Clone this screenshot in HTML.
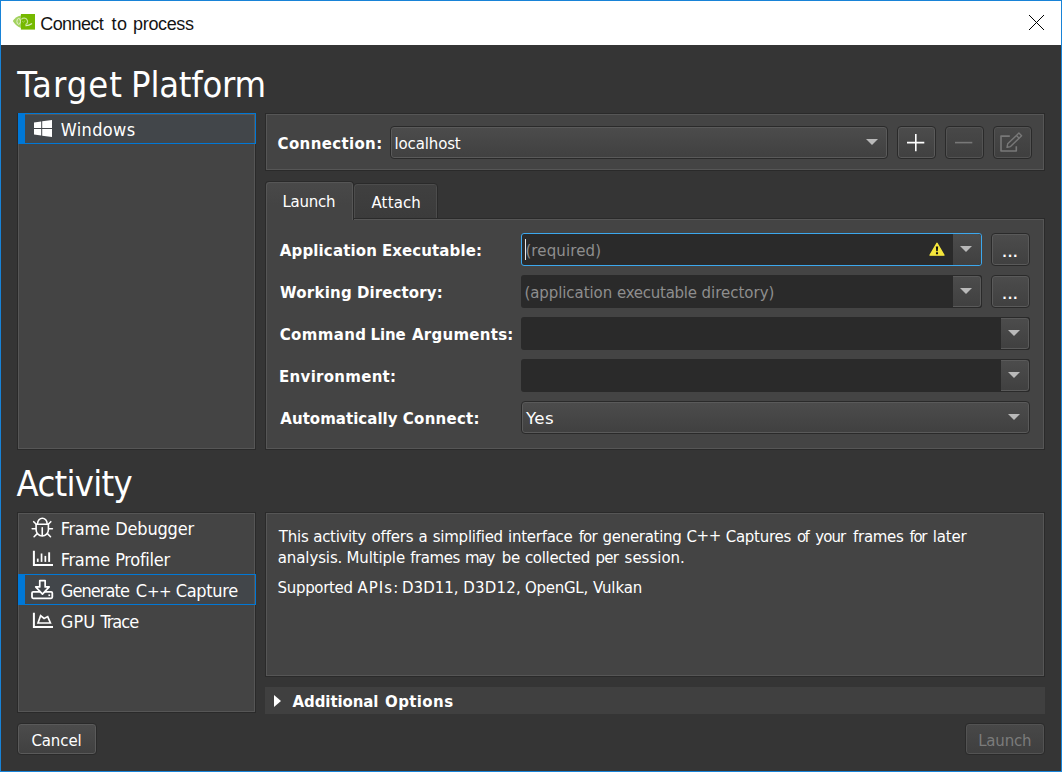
<!DOCTYPE html>
<html>
<head>
<meta charset="utf-8">
<title>Connect to process</title>
<style>
*{box-sizing:border-box;margin:0;padding:0}
html,body{width:1062px;height:772px;overflow:hidden;background:#353535}
body{position:relative;font-family:"DejaVu Sans Condensed","DejaVu Sans","Liberation Sans",sans-serif;font-size:16px;color:#fff}
.abs{position:absolute}
#win{position:absolute;left:0;top:0;width:1062px;height:772px;border:1px solid #1883d7;background:#353535}
#titlebar{position:absolute;left:1px;top:1px;width:1060px;height:44px;background:#fff}
.w{position:absolute;white-space:nowrap;line-height:normal}
.title{font:18px 'Liberation Sans','DejaVu Sans',sans-serif;color:#141414}
.h1{font:36px 'DejaVu Sans Condensed','DejaVu Sans','Liberation Sans',sans-serif;color:#fff}
.item{font:18px 'DejaVu Sans Condensed','DejaVu Sans','Liberation Sans',sans-serif;color:#fff}
.lbl{font:bold 16.67px 'DejaVu Sans Condensed','DejaVu Sans','Liberation Sans',sans-serif;color:#fff}
.txt{font:16.67px 'DejaVu Sans Condensed','DejaVu Sans','Liberation Sans',sans-serif;color:#fff}
.ph{font:16.67px 'DejaVu Sans Condensed','DejaVu Sans','Liberation Sans',sans-serif;color:#8e8e8e}
.txtw{font:16.67px 'DejaVu Sans','Liberation Sans',sans-serif;color:#fff}
.plus{font:15px 'DejaVu Sans','Liberation Sans',sans-serif;color:#fff}
.dots{font:bold 12px 'DejaVu Sans','Liberation Sans',sans-serif;color:#fff}
.dis{font:16.67px 'DejaVu Sans Condensed','DejaVu Sans','Liberation Sans',sans-serif;color:#7b7b7b}
.panel{position:absolute;background:#444;border:1px solid #2a2a2a;box-shadow:inset 0 0 0 1px #565656}
.sel{position:absolute;background:#42464a;border:1px solid #0078d7;border-left:7px solid #0078d7;box-shadow:inset -1px 0 0 0 #595755}
.inp{position:absolute;height:33px;background:#2a2a2a;border-radius:3px}
.bev{position:absolute;border:1px solid #2a2a2a;border-radius:4px;box-shadow:inset 0 0 0 1px #5a5a5a;background:linear-gradient(#4c4c4c,#404040)}
.bev.off{box-shadow:inset 0 0 0 1px #535353;background:linear-gradient(#484848,#3f3f3f)}
.dd{position:absolute;top:0;right:0;width:29px;height:33px;border:1px solid #2a2a2a;border-left:none;border-radius:0 4px 4px 0;box-shadow:inset -1px 0 0 0 #5a5a5a,inset 0 1px 0 0 #5a5a5a,inset 0 -1px 0 0 #5a5a5a;background:linear-gradient(#4c4c4c,#404040)}
.arrow{position:absolute;width:0;height:0;border-left:6px solid transparent;border-right:6px solid transparent;border-top:6.5px solid #b9b9b9}
</style>
</head>
<body>
<div id="win"></div>
<div id="titlebar">
  <svg class="abs" style="left:-1px;top:-1px" width="48" height="44" viewBox="0 0 48 44" fill="none">
    <path d="M20.9 14 H35 V29.6 H20.9 Z" fill="#76b900"/>
    <path d="M21 15.6 C17 16.4 14.4 18.6 12.8 21 C14.4 23.8 17 26.6 21 28 Z" fill="#a3d25f"/>
    <ellipse cx="18.7" cy="21.4" rx="1.8" ry="2.9" stroke="#e6f3d0" stroke-width="1"/>
    <path d="M21.4 19.4 C22.8 17.6 26.2 17.7 27.4 20.4 C27.9 22.4 26.9 24 25.4 24.6" stroke="#c6e297" stroke-width="1.2"/>
    <path d="M22.2 20.8 C23 22.8 24 22.6 24.8 20.6" stroke="#a8d468" stroke-width="1"/>
    <path d="M26 25.7 C28.4 25.7 30.2 24.9 31.6 23.8" stroke="#dcefc0" stroke-width="1.3" stroke-linecap="round"/>
  </svg>
  <svg class="abs" style="left:1027px;top:13px" width="17" height="17" viewBox="0 0 17 17"><path d="M1 1 L16 16 M16 1 L1 16" stroke="#000" stroke-width="1" fill="none"/></svg>
</div>

<!-- platform list -->
<div class="panel" style="left:17px;top:113px;width:239px;height:337px"></div>
<div class="sel" style="left:18px;top:113px;width:238px;height:31px;box-shadow:inset -1px 0 0 0 #595755,inset 0 1px 0 0 #595755"></div>
<svg class="abs" style="left:34px;top:120px" width="18" height="17" viewBox="0 0 18 17"><path d="M0 2.4 L7.2 1.4 V8 H0 Z M8.2 1.25 L18 0 V8 H8.2 Z M0 9 H7.2 V15.6 L0 14.6 Z M8.2 9 H18 V17 L8.2 15.75 Z" fill="#fff"/></svg>

<!-- connection panel -->
<div class="panel" style="left:265px;top:113px;width:780px;height:58px"></div>
<div class="bev" style="left:390px;top:126px;width:498px;height:33px"><div class="arrow" style="left:475px;top:12px"></div></div>
<div class="bev" style="left:897px;top:126px;width:39px;height:33px"></div>
<div class="bev off" style="left:945px;top:126px;width:39px;height:33px"></div>
<div class="bev off" style="left:993px;top:126px;width:39px;height:33px"></div>

<!-- tabs -->
<div class="panel" style="left:265px;top:218px;width:780px;height:232px"></div>
<div class="abs" style="left:353px;top:183px;width:85px;height:36px;background:linear-gradient(#404040,#3b3b3b);border:1px solid #2a2a2a;border-radius:4px 4px 0 0;box-shadow:inset 1px 1px 0 0 #4c4c4c,inset -1px 0 0 0 #4c4c4c"></div>
<div class="abs" style="left:354px;top:218px;width:84px;height:2px;background:#2a2a2a;border-bottom:1px solid #565656"></div>
<div class="abs" style="left:265px;top:181px;width:89px;height:39px;background:linear-gradient(#494949,#444 60%);border:1px solid #2a2a2a;border-bottom:none;border-radius:4px 4px 0 0;box-shadow:inset 1px 1px 0 0 #565656,inset -1px 0 0 0 #565656"></div>

<!-- form -->
<div class="inp" style="left:521px;top:233px;width:461px;border:1px solid #3ca8ee">
  <div class="abs" style="left:3px;top:5px;width:1px;height:21px;background:#e8e8e8"></div>
  <svg class="abs" style="left:407px;top:7.7px" width="16" height="14.4" viewBox="0 0 17 16" preserveAspectRatio="none"><path d="M8.5 1.4 L15.8 14.6 H1.2 Z" fill="#f6e73c" stroke="#f6e73c" stroke-width="1.6" stroke-linejoin="round"/><path d="M7.3 5 H9.7 L9.3 10.4 H7.7 Z M7.4 11.3 H9.6 V13.6 H7.4 Z" fill="#111"/></svg>
  <div class="abs" style="left:431px;top:0;width:28px;height:31px;background:linear-gradient(#4c4c4c,#404040);border-radius:0 3px 3px 0"><div class="arrow" style="left:7px;top:12px"></div></div>
</div>
<div class="bev" style="left:991px;top:233px;width:39px;height:33px"></div>

<div class="inp" style="left:521px;top:275px;width:461px"><div class="dd"><div class="arrow" style="left:7px;top:12px"></div></div></div>
<div class="bev" style="left:991px;top:275px;width:39px;height:33px"></div>

<div class="inp" style="left:521px;top:317px;width:509px"><div class="dd"><div class="arrow" style="left:7px;top:12px"></div></div></div>
<div class="inp" style="left:521px;top:359px;width:509px"><div class="dd"><div class="arrow" style="left:7px;top:12px"></div></div></div>
<div class="bev" style="left:521px;top:401px;width:509px;height:33px"><div class="arrow" style="left:486px;top:12px"></div></div>

<!-- activity list -->
<div class="panel" style="left:17px;top:512px;width:239px;height:201px"></div>
<div class="sel" style="left:18px;top:574px;width:238px;height:31px"></div>

<!-- description -->
<div class="panel" style="left:265px;top:512px;width:780px;height:165px"></div>

<!-- additional options -->
<div class="abs" style="left:265px;top:687px;width:780px;height:27px;background:#404040"></div>
<div class="abs" style="left:274px;top:695px;width:0;height:0;border-top:6px solid transparent;border-bottom:6px solid transparent;border-left:7px solid #fff"></div>

<div class="bev" style="left:17px;top:723px;width:80px;height:32px"></div>
<div class="bev off" style="left:965px;top:723px;width:80px;height:32px"></div>

<svg class="abs" style="left:0;top:0;pointer-events:none" width="1062" height="772" viewBox="0 0 1062 772" fill="none" stroke="#fff" stroke-width="1.6" stroke-linecap="round" stroke-linejoin="round">
  <!-- bug -->
  <path d="M37.6 523.6 A4.75 5.4 0 0 1 47.1 523.6"/>
  <path d="M36.1 524.2 H48.4 V529.8 A6.15 6.15 0 0 1 36.1 529.8 Z"/>
  <path d="M42.25 527.8 V535.4 M33.7 521.7 L36 524 M32.2 528.7 H35.6 M34.1 536.7 L36.9 533.9 M50.8 521.7 L48.5 524 M52.4 528.7 H49 M50.5 536.7 L47.7 533.9"/>
  <!-- bar chart -->
  <path d="M33.9 551.8 V565 H52" stroke-width="2" stroke-linecap="square" stroke-linejoin="miter"/>
  <g fill="#fff" stroke="none"><rect x="36.9" y="558.6" width="1.7" height="3.3"/><rect x="40.7" y="553.5" width="1.7" height="8.4"/><rect x="44.5" y="555.9" width="1.7" height="6"/><rect x="48.2" y="552.3" width="1.9" height="9.6"/></g>
  <!-- download -->
  <rect x="32" y="591.8" width="20.3" height="6.5" rx="1.2" stroke-width="1.8"/>
  <path d="M39.75 580.6 H45.15 V586.9 H49.2 L42.45 594.2 L35.7 586.9 H39.75 Z" fill="#42464a" stroke-width="1.7"/>
  <rect x="48.4" y="594.4" width="1.7" height="1.7" fill="#fff" stroke="none"/>
  <!-- gpu trace -->
  <path d="M33.9 613.8 V627 H52" stroke-width="2" stroke-linecap="square" stroke-linejoin="miter"/>
  <path d="M38 623 L40.6 615.6 L44.1 618.5 L47.7 616.6 L50.4 623 Z" stroke-width="1.7" stroke-linejoin="miter"/>
  <!-- plus / minus / edit -->
  <path d="M915.8 133.9 V151.3 M907 142.6 H924.3" stroke-width="1.6" stroke-linecap="butt"/>
  <path d="M955 142.6 H972.3" stroke="#787878" stroke-width="1.6" stroke-linecap="butt"/>
  <path d="M1009.8 136.1 H1001 V151 H1016.3 V146.2" stroke="#787878" stroke-width="1.6" stroke-linecap="butt" stroke-linejoin="round"/>
  <path d="M1007 147.3 L1007.7 143.8 L1018.9 133.1 L1021.6 135.8 L1010.5 146.6 Z M1016.4 135.5 L1019.2 138.2" stroke="#787878" stroke-width="1.4"/>
</svg>
<div class="phrase"><span class="w title" style="left:40.3px;top:14px;letter-spacing:-0.60px">Connect</span> <span class="w title" style="left:111.6px;top:14px;letter-spacing:0.51px">to</span> <span class="w title" style="left:133.1px;top:14px;letter-spacing:-0.35px">process</span></div>
<div class="phrase"><span class="w h1" style="left:17.2px;top:64px;letter-spacing:1.04px">Target</span> <span class="w h1" style="left:131.1px;top:64px;letter-spacing:-0.21px">Platform</span></div>
<div class="phrase"><span class="w h1" style="left:16.6px;top:463px;letter-spacing:-0.72px">Activity</span></div>
<div class="phrase"><span class="w item" style="left:60.8px;top:119px;letter-spacing:0.35px">Windows</span></div>
<div class="phrase"><span class="w item" style="left:60.8px;top:518px;letter-spacing:-0.32px">Frame</span> <span class="w item" style="left:115.2px;top:518px;letter-spacing:-0.17px">Debugger</span></div>
<div class="phrase"><span class="w item" style="left:60.8px;top:549px;letter-spacing:-0.32px">Frame</span> <span class="w item" style="left:115.2px;top:549px;letter-spacing:-0.29px">Profiler</span></div>
<div class="phrase"><span class="w item" style="left:60.8px;top:580px;letter-spacing:-0.93px">Generate</span> <span class="w item" style="left:135.7px;top:580px">C</span><span class="w plus" style="left:146.9px;top:583px">+</span><span class="w plus" style="left:158.9px;top:583px">+</span> <span class="w item" style="left:175.8px;top:580px;letter-spacing:-0.33px">Capture</span></div>
<div class="phrase"><span class="w item" style="left:60.8px;top:611px;letter-spacing:0.10px">GPU</span> <span class="w item" style="left:100.5px;top:611px;letter-spacing:-1.02px">Trace</span></div>
<div class="phrase"><span class="w lbl" style="left:277.6px;top:134px;letter-spacing:0.36px">Connection:</span></div>
<div class="phrase"><span class="w lbl" style="left:279.8px;top:241px;letter-spacing:0.15px">Application</span> <span class="w lbl" style="left:381.9px;top:241px;letter-spacing:0.11px">Executable:</span></div>
<div class="phrase"><span class="w lbl" style="left:279.9px;top:283px;letter-spacing:0.30px">Working</span> <span class="w lbl" style="left:356.9px;top:283px;letter-spacing:0.13px">Directory:</span></div>
<div class="phrase"><span class="w lbl" style="left:279.7px;top:325px;letter-spacing:0.38px">Command</span> <span class="w lbl" style="left:370.6px;top:325px;letter-spacing:-0.14px">Line</span> <span class="w lbl" style="left:412.0px;top:325px;letter-spacing:0.27px">Arguments:</span></div>
<div class="phrase"><span class="w lbl" style="left:279.1px;top:367px;letter-spacing:0.29px">Environment:</span></div>
<div class="phrase"><span class="w lbl" style="left:280.3px;top:409px;letter-spacing:0.04px">Automatically</span> <span class="w lbl" style="left:402.8px;top:409px;letter-spacing:0.27px">Connect:</span></div>
<div class="phrase"><span class="w lbl" style="left:292.6px;top:692px;letter-spacing:-0.10px">Additional</span> <span class="w lbl" style="left:385.0px;top:692px;letter-spacing:0.40px">Options</span></div>
<div class="phrase"><span class="w txt" style="left:394.5px;top:134px;letter-spacing:-0.13px">localhost</span></div>
<div class="phrase"><span class="w txt" style="left:282.4px;top:192px;letter-spacing:-0.25px">Launch</span></div>
<div class="phrase"><span class="w txt" style="left:371.5px;top:193px;letter-spacing:0.15px">Attach</span></div>
<div class="phrase"><span class="w txtw" style="left:526.0px;top:409px;letter-spacing:0.38px">Yes</span></div>
<div class="phrase"><span class="w txt" style="left:31.4px;top:731px;letter-spacing:-0.10px">Cancel</span></div>
<div class="phrase"><span class="w dis" style="left:978.2px;top:731px;letter-spacing:-0.17px">Launch</span></div>
<div class="phrase"><span class="w ph" style="left:525.4px;top:241px;letter-spacing:0.13px">(required)</span></div>
<div class="phrase"><span class="w ph" style="left:524.4px;top:283px;letter-spacing:-0.07px">(application</span> <span class="w ph" style="left:617.1px;top:283px;letter-spacing:-0.26px">executable</span> <span class="w ph" style="left:701.5px;top:283px">directory)</span></div>
<div class="phrase"><span class="w dots" style="left:1002.2px;top:246px;letter-spacing:0.88px">...</span></div>
<div class="phrase"><span class="w dots" style="left:1002.2px;top:288px;letter-spacing:0.88px">...</span></div>
<div class="phrase"><span class="w txt" style="left:278.8px;top:527px;letter-spacing:-0.23px">This</span> <span class="w txt" style="left:313.3px;top:527px;letter-spacing:-0.32px">activity</span> <span class="w txt" style="left:371.6px;top:527px;letter-spacing:-0.17px">offers</span> <span class="w txt" style="left:418.5px;top:527px">a</span> <span class="w txt" style="left:432.8px;top:527px;letter-spacing:-0.25px">simplified</span> <span class="w txt" style="left:508.1px;top:527px;letter-spacing:-0.27px">interface</span> <span class="w txt" style="left:578.7px;top:527px;letter-spacing:-0.87px">for</span> <span class="w txt" style="left:602.6px;top:527px;letter-spacing:-0.30px">generating</span> <span class="w txt" style="left:686.4px;top:527px">C</span><span class="w plus" style="left:696.5px;top:527px">+</span><span class="w plus" style="left:708.7px;top:527px">+</span> <span class="w txt" style="left:725.7px;top:527px;letter-spacing:-0.25px">Captures</span> <span class="w txt" style="left:796.9px;top:527px;letter-spacing:-1.66px">of</span> <span class="w txt" style="left:815.3px;top:527px;letter-spacing:-0.92px">your</span> <span class="w txt" style="left:853.1px;top:527px;letter-spacing:-0.30px">frames</span> <span class="w txt" style="left:909.4px;top:527px;letter-spacing:-1.26px">for</span> <span class="w txt" style="left:932.8px;top:527px;letter-spacing:-0.19px">later</span></div>
<div class="phrase"><span class="w txt" style="left:277.8px;top:548px;letter-spacing:-0.11px">analysis.</span> <span class="w txt" style="left:346.5px;top:548px;letter-spacing:-0.13px">Multiple</span> <span class="w txt" style="left:410.2px;top:548px;letter-spacing:-0.44px">frames</span> <span class="w txt" style="left:465.1px;top:548px;letter-spacing:-1.16px">may</span> <span class="w txt" style="left:501.7px;top:548px;letter-spacing:-0.29px">be</span> <span class="w txt" style="left:524.9px;top:548px;letter-spacing:-0.30px">collected</span> <span class="w txt" style="left:595.5px;top:548px;letter-spacing:-0.69px">per</span> <span class="w txt" style="left:624.6px;top:548px">session.</span></div>
<div class="phrase"><span class="w txt" style="left:277.6px;top:578px;letter-spacing:-0.32px">Supported</span> <span class="w txt" style="left:357.5px;top:578px;letter-spacing:1.03px">APIs:</span> <span class="w txt" style="left:402.1px;top:578px;letter-spacing:-0.02px">D3D11,</span> <span class="w txt" style="left:463.3px;top:578px;letter-spacing:0.23px">D3D12,</span> <span class="w txt" style="left:525.0px;top:578px;letter-spacing:-0.26px">OpenGL,</span> <span class="w txt" style="left:592.9px;top:578px;letter-spacing:-0.08px">Vulkan</span></div>
</body>
</html>
